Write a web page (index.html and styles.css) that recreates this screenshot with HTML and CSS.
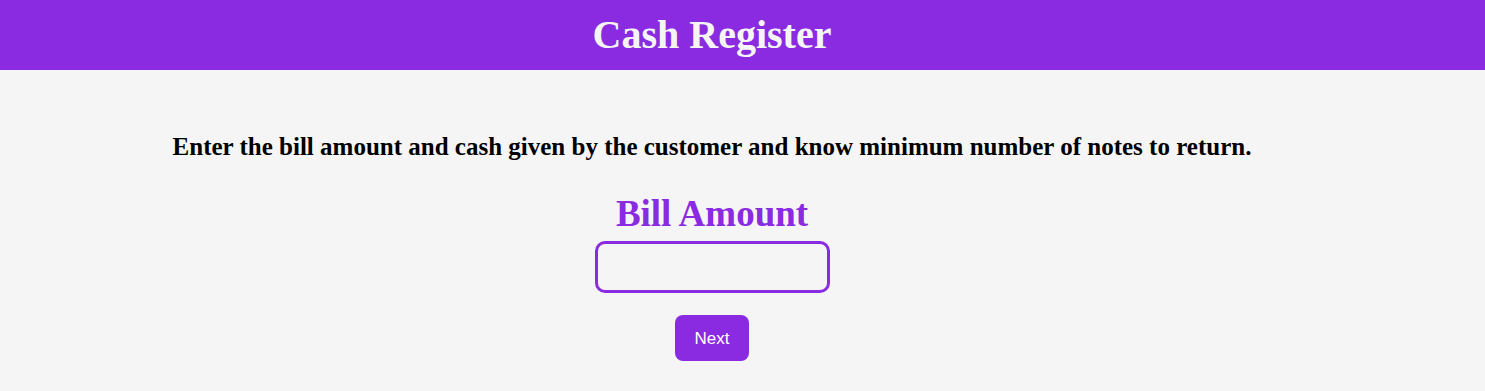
FILE: index.html
```html
<!DOCTYPE html>
<html lang="en">
<head>
<meta charset="utf-8">
<title>Cash Register</title>
<link rel="stylesheet" href="styles.css">
</head>
<body>
<header class="header">
  <h1 class="title">Cash Register</h1>
</header>
<main class="main">
  <p class="intro">Enter the bill amount and cash given by the customer and know minimum number of notes to return.</p>
  <label class="label" for="bill">Bill Amount</label>
  <input class="input" id="bill" type="number">
  <button class="btn" type="button">Next</button>
</main>
</body>
</html>
```

FILE: styles.css
```css
html, body {
  margin: 0;
  padding: 0;
}
body {
  background: #f5f5f5;
  font-family: "Liberation Serif", "Times New Roman", serif;
  color: #000;
}
.header {
  background: #8a2be2;
  height: 70px;
}
.title {
  width: 1424px;
  margin: 0;
  text-align: center;
  font-size: 40px;
  line-height: 70px;
  font-weight: bold;
  color: #f5f5f5;
}
.main {
  width: 1424px;
  display: flex;
  flex-direction: column;
  align-items: center;
  padding-top: 63px;
}
.intro {
  margin: 0;
  font-size: 25px;
  font-weight: bold;
  text-align: center;
}
.label {
  margin-top: 31px;
  font-size: 37px;
  font-weight: bold;
  color: #8a2be2;
}
.input {
  box-sizing: border-box;
  margin-top: 6px;
  width: 235px;
  height: 52px;
  border: 3px solid #8a2be2;
  border-radius: 10px;
  background: #f5f5f5;
  outline: none;
  font-size: 20px;
  padding: 0 10px;
}
.btn {
  margin-top: 22px;
  width: 74px;
  height: 46px;
  border: none;
  border-radius: 8px;
  background: #8a2be2;
  color: #fff;
  font-family: "Liberation Sans", Arial, sans-serif;
  font-size: 17px;
  padding-top: 2px;
  cursor: pointer;
}
```
